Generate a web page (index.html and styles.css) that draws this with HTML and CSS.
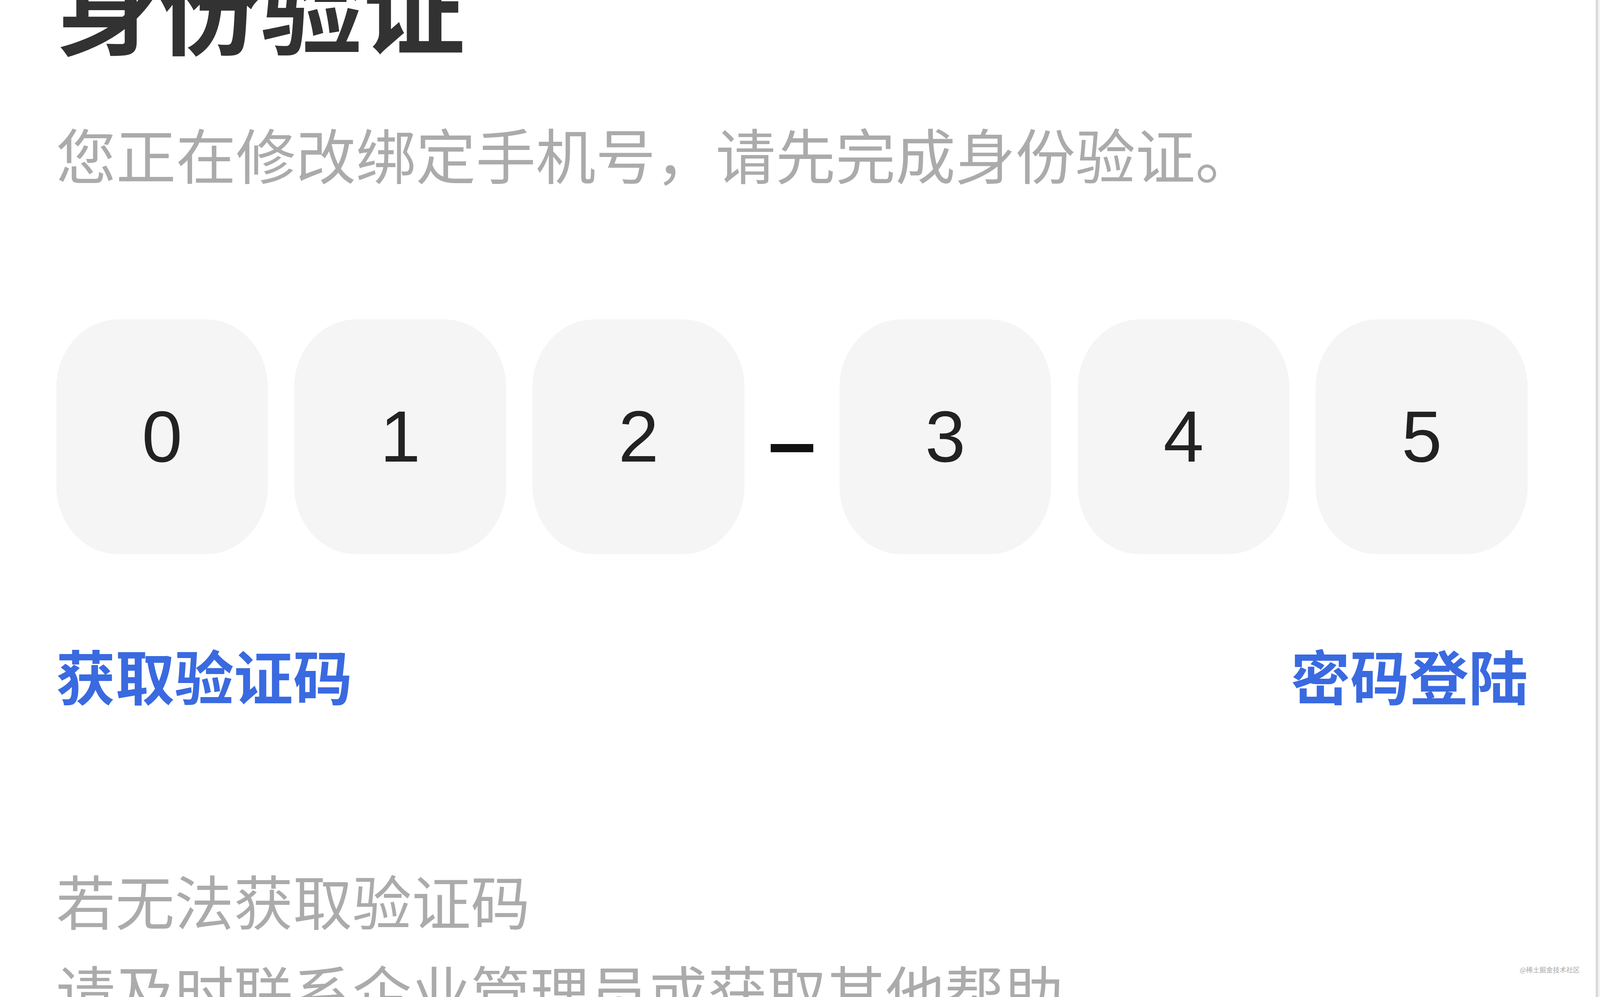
FILE: index.html
```html
<!DOCTYPE html>
<html lang="zh-CN">
<head>
<meta charset="utf-8">
<meta name="viewport" content="width=device-width, initial-scale=1">
<title>身份验证</title>
<link rel="stylesheet" href="styles.css">
</head>
<body>
<div class="screen">
  <h1 class="title">身份验证</h1>
  <p class="subtitle">您正在修改绑定手机号，请先完成身份验证。</p>
  <div class="code-row">
    <div class="cell">0</div>
    <div class="cell">1</div>
    <div class="cell">2</div>
    <div class="dash"></div>
    <div class="cell">3</div>
    <div class="cell">4</div>
    <div class="cell">5</div>
  </div>
  <div class="links">
    <a class="link">获取验证码</a>
    <a class="link">密码登陆</a>
  </div>
  <p class="help">若无法获取验证码<br>请及时联系企业管理员或获取其他帮助</p>
  <div class="watermark">@稀土掘金技术社区</div>
</div>
</body>
</html>
```
FILE: styles.css
```css
:root {
  --ux: calc(100vw / 4536);
  --uy: calc(100vh / 2553);
}
html, body {
  margin: 0;
  padding: 0;
  background: #f3f3f3;
  overflow: hidden;
}
body {
  width: 100vw;
  height: 100vh;
  font-family: "Noto Sans CJK SC", "Noto Sans", sans-serif;
}
.screen {
  position: relative;
  display: flow-root;
  box-sizing: border-box;
  width: calc(4530 * var(--ux));
  height: 100vh;
  padding: 0 calc(192 * var(--ux)) 0 calc(159 * var(--ux));
  background: #ffffff;
  border-right: calc(7 * var(--ux)) solid #d9d9d9;
  overflow: hidden;
}
.title {
  margin: calc(-138 * var(--uy)) 0 0 0;
  font-size: calc(290 * var(--ux));
  line-height: calc(290 * var(--uy));
  font-weight: 700;
  color: #323232;
}
.subtitle {
  margin: calc(155 * var(--uy)) 0 0 0;
  font-size: calc(170 * var(--ux));
  line-height: calc(170 * var(--uy));
  font-weight: 400;
  color: #ababab;
  white-space: nowrap;
}
.code-row {
  margin-top: calc(341 * var(--uy));
  display: flex;
  justify-content: space-between;
  align-items: center;
}
.cell {
  width: calc(601 * var(--ux));
  height: calc(601 * var(--uy));
  border-radius: calc(175 * var(--ux)) / calc(175 * var(--uy));
  background: #f5f5f5;
  display: flex;
  align-items: center;
  justify-content: center;
  font-family: "Liberation Sans", Arial, sans-serif;
  font-size: calc(206 * var(--ux));
  line-height: 1;
  color: #222222;
}
.dash {
  width: calc(120 * var(--ux));
  height: calc(21 * var(--uy));
  background: #111111;
  margin-top: calc(58 * var(--uy));
}
.links {
  margin-top: calc(224 * var(--uy));
  display: flex;
  justify-content: space-between;
}
.link {
  font-size: calc(168 * var(--ux));
  line-height: calc(168 * var(--uy));
  font-weight: 700;
  color: #3a6ae0;
  text-decoration: none;
}
.help {
  margin: calc(376 * var(--uy)) 0 0 0;
  font-size: calc(168 * var(--ux));
  line-height: calc(232 * var(--uy));
  color: #ababab;
  white-space: nowrap;
}
.watermark {
  position: absolute;
  right: calc(45 * var(--ux));
  top: calc(2474 * var(--uy));
  font-size: calc(19 * var(--ux));
  line-height: 1;
  color: #a8a8a8;
}
```
